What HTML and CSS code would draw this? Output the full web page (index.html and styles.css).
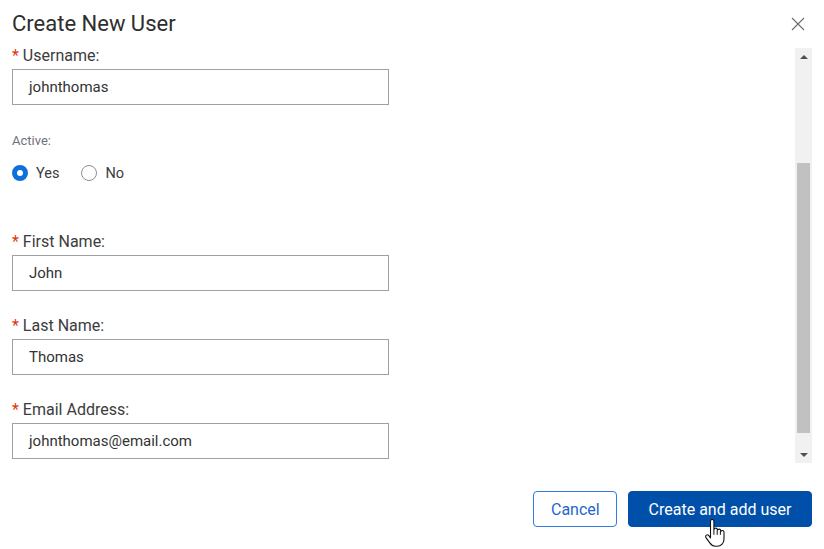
FILE: index.html
```html
<!DOCTYPE html>
<html lang="en">
<head>
<meta charset="utf-8">
<title>Create New User</title>
<link rel="stylesheet" href="styles.css">
</head>
<body>
<div class="dialog">
  <header class="dialog-header">
    <h1 class="dialog-title">Create New User</h1>
    <button class="close-btn" aria-label="Close">
      <svg width="14" height="14" viewBox="0 0 14 14"><path d="M1 1L13 13M13 1L1 13" stroke="#6b6b6b" stroke-width="1.1" fill="none"/></svg>
    </button>
  </header>
  <div class="dialog-body">
    <form class="form">
      <div class="field">
        <label class="label"><span class="req">*</span> Username:</label>
        <div class="input">johnthomas</div>
      </div>
      <div class="active-group">
        <div class="small-label">Active:</div>
        <div class="radios">
          <span class="radio-item"><span class="radio checked"></span>Yes</span>
          <span class="radio-item"><span class="radio"></span>No</span>
        </div>
      </div>
      <div class="field">
        <label class="label"><span class="req">*</span> First Name:</label>
        <div class="input">John</div>
      </div>
      <div class="field">
        <label class="label"><span class="req">*</span> Last Name:</label>
        <div class="input">Thomas</div>
      </div>
      <div class="field">
        <label class="label"><span class="req">*</span> Email Address:</label>
        <div class="input">johnthomas@email.com</div>
      </div>
    </form>
    <div class="scrollbar">
      <div class="arrow up"></div>
      <div class="track"><div class="thumb"></div></div>
      <div class="arrow down"></div>
    </div>
  </div>
  <footer class="dialog-footer">
    <button class="btn btn-secondary">Cancel</button>
    <button class="btn btn-primary">Create and add user</button>
  </footer>
  <svg class="cursor" width="22" height="30" viewBox="0 0 22 30">
    <path d="M6.5 2.2c0-1 .8-1.7 1.7-1.7s1.7.7 1.7 1.7v8.3c.3-.9 1-1.4 1.8-1.4.9 0 1.7.7 1.7 1.6v.6c.3-.8 1-1.2 1.7-1.2.9 0 1.6.7 1.7 1.600v.8c.3-.6.9-1 1.6-1 .9 0 1.6.8 1.6 1.7v6.8c0 4.2-2.8 7.2-7 7.2h-1.5c-2.7 0-4.3-1.2-5.7-3.3L2 18.6c-.6-.9-.4-2 .4-2.5.8-.5 1.8-.3 2.4.5l1.7 2.3z" fill="#fff" stroke="#111" stroke-width="1.1" stroke-linejoin="round"/>
    <path d="M9.9 10.6v5.2M13.2 11.4v4.4M16.4 12.2v3.6" stroke="#111" stroke-width="1" fill="none"/>
  </svg>
</div>
</body>
</html>
```
FILE: styles.css
```css
* { box-sizing: border-box; }
html, body { margin: 0; padding: 0; background: #fff; }
body { font-family: Roboto, "Noto Sans", "Liberation Sans", sans-serif; color: #333; }

.dialog {
  position: relative;
  width: 824px;
  height: 549px;
  padding: 0 12px;
}

.dialog-header {
  height: 48px;
  display: flex;
  align-items: flex-start;
  justify-content: space-between;
}
.dialog-title {
  margin: 0;
  padding-top: 11px;
  font-size: 22px;
  font-weight: 400;
  line-height: 26px;
  color: #2e2e2e;
}
.close-btn {
  margin: 17px 7px 0 0;
  padding: 0;
  border: 0;
  background: none;
  width: 14px;
  height: 14px;
  display: flex;
}

.dialog-body {
  height: 415px;
  display: flex;
  justify-content: space-between;
}
.form {
  width: 377px;
  margin-top: -4px;
}
.field { margin-bottom: 23px; }
.label {
  display: block;
  font-size: 16px;
  line-height: 20px;
  color: #3c3c3c;
  padding-top: 2px;
  margin-bottom: 3px;
}
.req { color: #e0360f; }
.input {
  height: 36px;
  border: 1px solid #9ca1a6;
  padding: 0 16px;
  font-size: 15px;
  line-height: 34px;
  color: #333;
}

.active-group { padding-top: 5px; }
.small-label {
  font-size: 13px;
  line-height: 16px;
  color: #6e7276;
}
.radios {
  display: flex;
  gap: 22px;
  margin-top: 16px;
  height: 16px;
  align-items: center;
  margin-bottom: 49px;
}
.radio-item {
  display: flex;
  align-items: center;
  gap: 8px;
  font-size: 14.5px;
  color: #3c3c3c;
}
.radio {
  width: 16px;
  height: 16px;
  border-radius: 50%;
  border: 1px solid #8c8f93;
  background: #fff;
}
.radio.checked {
  border: 5px solid #0f6fdc;
  background: #fff;
}

.scrollbar {
  width: 17px;
  height: 415px;
  background: #f1f1f1;
  display: flex;
  flex-direction: column;
}
.arrow { height: 17px; display: flex; justify-content: center; align-items: center; }
.arrow.up::before {
  content: "";
  border-left: 4px solid transparent;
  border-right: 4px solid transparent;
  border-bottom: 4px solid #505050;
}
.arrow.down::before {
  content: "";
  border-left: 4px solid transparent;
  border-right: 4px solid transparent;
  border-top: 4px solid #505050;
}
.track { flex: 1; padding: 98px 2px 13px; }
.thumb { height: 100%; background: #c1c1c1; }

.dialog-footer {
  display: flex;
  justify-content: flex-end;
  gap: 11px;
  padding-top: 28px;
}
.btn {
  height: 36px;
  border-radius: 4px;
  font-family: Roboto, "Noto Sans", "Liberation Sans", sans-serif;
  font-size: 16px;
  padding: 0 17px;
  cursor: pointer;
}
.btn-secondary {
  width: 84px;
  background: #fff;
  border: 1px solid #2f7be0;
  color: #1f66cc;
}
.btn-primary {
  width: 184px;
  background: #0050aa;
  border: 1px solid #0050aa;
  color: #fff;
}

.cursor {
  position: absolute;
  left: 704px;
  top: 519px;
}
```
